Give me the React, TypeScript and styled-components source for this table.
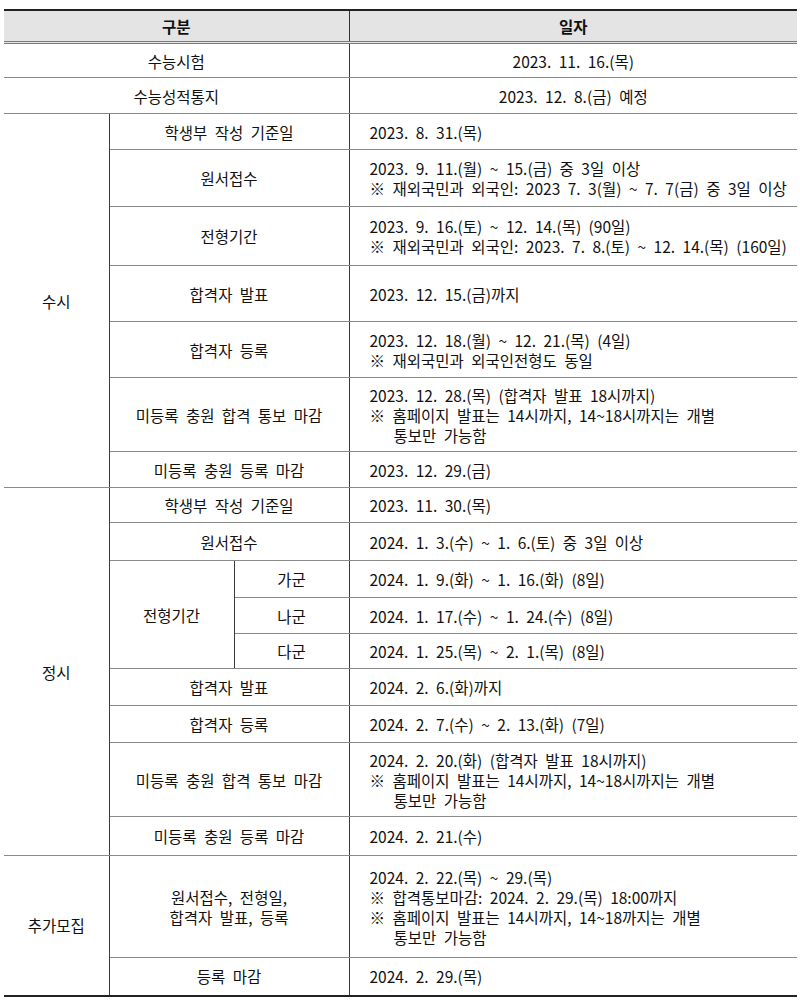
import styled, { createGlobalStyle } from "styled-components";

const GlobalStyle = createGlobalStyle`
  body {
    margin: 0;
    background: #fff;
    font-family: "Noto Sans CJK KR", "Noto Sans", sans-serif;
    color: #111;
  }
`;

const Page = styled.div`
  padding: 9px 3px 0 4px;
`;

const Table = styled.table`
  width: 793px;
  table-layout: fixed;
  border-collapse: collapse;
  font-size: 15.5px;
  line-height: 20px;
  word-spacing: 4px;
  border-top: 2px solid #222;
  border-bottom: 2px solid #222;
`;

const Row = styled.tr<{ $h: number }>`
  height: ${({ $h }) => $h}px;
`;

const HeadCell = styled.th`
  height: 30px;
  padding: 0;
  background: #e4e4e4;
  font-weight: 700;
  text-align: center;
  border-bottom: 3px double #7a7a7a;
  border-right: 1px solid #333;

  &:last-child {
    border-right: none;
  }
`;

const Cell = styled.td<{ $left?: boolean; $last?: boolean }>`
  padding: ${({ $left }) => ($left ? "0 2px 0 20px" : "0 4px")};
  text-align: ${({ $left }) => ($left ? "left" : "center")};
  vertical-align: middle;
  border-bottom: 1px solid #8a8a8a;
  border-right: ${({ $last }) => ($last ? "none" : "1px solid #3a3a3a")};
  white-space: nowrap;
`;

const Line = styled.div``;

const Note = styled.div`
  padding-left: 24px;
  text-indent: -24px;
`;

export default function App() {
  const note = (t: string) => <Note>※ {t}</Note>;

  return (
    <>
      <GlobalStyle />
      <Page>
        <Table>
          <colgroup>
            <col style={{ width: 105 }} />
            <col style={{ width: 125 }} />
            <col style={{ width: 115 }} />
            <col style={{ width: 448 }} />
          </colgroup>
          <thead>
            <tr>
              <HeadCell colSpan={3}>구분</HeadCell>
              <HeadCell>일자</HeadCell>
            </tr>
          </thead>
          <tbody>
            <Row $h={35}>
              <Cell colSpan={3}>수능시험</Cell>
              <Cell $last>2023. 11. 16.(목)</Cell>
            </Row>
            <Row $h={36}>
              <Cell colSpan={3}>수능성적통지</Cell>
              <Cell $last>2023. 12. 8.(금) 예정</Cell>
            </Row>

            {/* 수시 */}
            <Row $h={36}>
              <Cell rowSpan={7}>수시</Cell>
              <Cell colSpan={2}>학생부 작성 기준일</Cell>
              <Cell $left $last>2023. 8. 31.(목)</Cell>
            </Row>
            <Row $h={57}>
              <Cell colSpan={2}>원서접수</Cell>
              <Cell $left $last>
                <Line>2023. 9. 11.(월) ~ 15.(금) 중 3일 이상</Line>
                {note("재외국민과 외국인: 2023 7. 3(월) ~ 7. 7(금) 중 3일 이상")}
              </Cell>
            </Row>
            <Row $h={59}>
              <Cell colSpan={2}>전형기간</Cell>
              <Cell $left $last>
                <Line>2023. 9. 16.(토) ~ 12. 14.(목) (90일)</Line>
                {note("재외국민과 외국인: 2023. 7. 8.(토) ~ 12. 14.(목) (160일)")}
              </Cell>
            </Row>
            <Row $h={56}>
              <Cell colSpan={2}>합격자 발표</Cell>
              <Cell $left $last>2023. 12. 15.(금)까지</Cell>
            </Row>
            <Row $h={56}>
              <Cell colSpan={2}>합격자 등록</Cell>
              <Cell $left $last>
                <Line>2023. 12. 18.(월) ~ 12. 21.(목) (4일)</Line>
                {note("재외국민과 외국인전형도 동일")}
              </Cell>
            </Row>
            <Row $h={74}>
              <Cell colSpan={2}>미등록 충원 합격 통보 마감</Cell>
              <Cell $left $last>
                <Line>2023. 12. 28.(목) (합격자 발표 18시까지)</Line>
                <Note>
                  ※ 홈페이지 발표는 14시까지, 14~18시까지는 개별
                  <br />
                  통보만 가능함
                </Note>
              </Cell>
            </Row>
            <Row $h={36}>
              <Cell colSpan={2}>미등록 충원 등록 마감</Cell>
              <Cell $left $last>2023. 12. 29.(금)</Cell>
            </Row>

            {/* 정시 */}
            <Row $h={35}>
              <Cell rowSpan={9}>정시</Cell>
              <Cell colSpan={2}>학생부 작성 기준일</Cell>
              <Cell $left $last>2023. 11. 30.(목)</Cell>
            </Row>
            <Row $h={38}>
              <Cell colSpan={2}>원서접수</Cell>
              <Cell $left $last>2024. 1. 3.(수) ~ 1. 6.(토) 중 3일 이상</Cell>
            </Row>
            <Row $h={37}>
              <Cell rowSpan={3}>전형기간</Cell>
              <Cell>가군</Cell>
              <Cell $left $last>2024. 1. 9.(화) ~ 1. 16.(화) (8일)</Cell>
            </Row>
            <Row $h={36}>
              <Cell>나군</Cell>
              <Cell $left $last>2024. 1. 17.(수) ~ 1. 24.(수) (8일)</Cell>
            </Row>
            <Row $h={35}>
              <Cell>다군</Cell>
              <Cell $left $last>2024. 1. 25.(목) ~ 2. 1.(목) (8일)</Cell>
            </Row>
            <Row $h={37}>
              <Cell colSpan={2}>합격자 발표</Cell>
              <Cell $left $last>2024. 2. 6.(화)까지</Cell>
            </Row>
            <Row $h={37}>
              <Cell colSpan={2}>합격자 등록</Cell>
              <Cell $left $last>2024. 2. 7.(수) ~ 2. 13.(화) (7일)</Cell>
            </Row>
            <Row $h={74}>
              <Cell colSpan={2}>미등록 충원 합격 통보 마감</Cell>
              <Cell $left $last>
                <Line>2024. 2. 20.(화) (합격자 발표 18시까지)</Line>
                <Note>
                  ※ 홈페이지 발표는 14시까지, 14~18시까지는 개별
                  <br />
                  통보만 가능함
                </Note>
              </Cell>
            </Row>
            <Row $h={39}>
              <Cell colSpan={2}>미등록 충원 등록 마감</Cell>
              <Cell $left $last>2024. 2. 21.(수)</Cell>
            </Row>

            {/* 추가모집 */}
            <Row $h={102}>
              <Cell rowSpan={2}>추가모집</Cell>
              <Cell colSpan={2}>
                원서접수, 전형일,
                <br />
                합격자 발표, 등록
              </Cell>
              <Cell $left $last>
                <Line>2024. 2. 22.(목) ~ 29.(목)</Line>
                {note("합격통보마감: 2024. 2. 29.(목) 18:00까지")}
                <Note>
                  ※ 홈페이지 발표는 14시까지, 14~18까지는 개별
                  <br />
                  통보만 가능함
                </Note>
              </Cell>
            </Row>
            <Row $h={38}>
              <Cell colSpan={2}>등록 마감</Cell>
              <Cell $left $last>2024. 2. 29.(목)</Cell>
            </Row>
          </tbody>
        </Table>
      </Page>
    </>
  );
}
